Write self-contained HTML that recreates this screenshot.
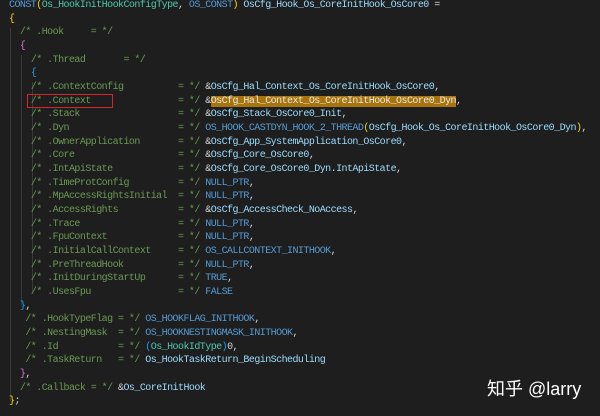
<!DOCTYPE html>
<html><head><meta charset="utf-8"><style>
html,body{margin:0;padding:0;background:#1e1e1e;width:600px;height:416px;overflow:hidden}
pre{position:absolute;left:9px;top:-1px;margin:0;font-family:"Liberation Mono",monospace;font-size:10px;line-height:13.67px;color:#d4d4d4;letter-spacing:-0.55px}
.c{color:#6a9955}.v{color:#9cdcfe}.m{color:#569cd6}.t{color:#4ec9b0}.y{color:#ffd700}.p{color:#da70d6}.b{color:#179fff}
.hl{background:#a8740c;color:#e8e8e8}
.box{position:absolute;left:27px;top:94px;width:86px;height:14px;border:1.5px solid #d8242b;box-sizing:border-box}
.g{position:absolute;width:1px;background:#3a3a3a}
.wm{position:absolute;left:487px;top:375px;color:#fff;font-family:"Liberation Sans","Noto Sans CJK SC",sans-serif;font-size:18px;white-space:nowrap}
</style></head><body>
<div class="g" style="left:10px;top:28px;height:373px"></div>
<div class="g" style="left:21px;top:55px;height:250px"></div>
<div class="g" style="left:32px;top:82px;height:210px"></div>
<pre><span class="m">CONST</span><span class="y">(</span><span class="t">Os_HookInitHookConfigType</span>, <span class="m">OS_CONST</span><span class="y">)</span> <span class="v">OsCfg_Hook_Os_CoreInitHook_OsCore0</span> =
<span class="y">{</span>
  <span class="c">/* .Hook     = */</span>
  <span class="p">{</span>
    <span class="c">/* .Thread       = */</span>
    <span class="b">{</span>
    <span class="c">/* .ContextConfig          = */</span> &amp;<span class="v">OsCfg_Hal_Context_Os_CoreInitHook_OsCore0</span>,
    <span class="c">/* .Context                = */</span> &amp;<span class="hl">OsCfg_Hal_Context_Os_CoreInitHook_OsCore0_Dyn</span>,
    <span class="c">/* .Stack                  = */</span> &amp;<span class="v">OsCfg_Stack_OsCore0_Init</span>,
    <span class="c">/* .Dyn                    = */</span> <span class="m">OS_HOOK_CASTDYN_HOOK_2_THREAD</span><span class="y">(</span><span class="v">OsCfg_Hook_Os_CoreInitHook_OsCore0_Dyn</span><span class="y">)</span>,
    <span class="c">/* .OwnerApplication       = */</span> &amp;<span class="v">OsCfg_App_SystemApplication_OsCore0</span>,
    <span class="c">/* .Core                   = */</span> &amp;<span class="v">OsCfg_Core_OsCore0</span>,
    <span class="c">/* .IntApiState            = */</span> &amp;<span class="v">OsCfg_Core_OsCore0_Dyn.IntApiState</span>,
    <span class="c">/* .TimeProtConfig         = */</span> <span class="m">NULL_PTR</span>,
    <span class="c">/* .MpAccessRightsInitial  = */</span> <span class="m">NULL_PTR</span>,
    <span class="c">/* .AccessRights           = */</span> &amp;<span class="v">OsCfg_AccessCheck_NoAccess</span>,
    <span class="c">/* .Trace                  = */</span> <span class="m">NULL_PTR</span>,
    <span class="c">/* .FpuContext             = */</span> <span class="m">NULL_PTR</span>,
    <span class="c">/* .InitialCallContext     = */</span> <span class="m">OS_CALLCONTEXT_INITHOOK</span>,
    <span class="c">/* .PreThreadHook          = */</span> <span class="m">NULL_PTR</span>,
    <span class="c">/* .InitDuringStartUp      = */</span> <span class="m">TRUE</span>,
    <span class="c">/* .UsesFpu                = */</span> <span class="m">FALSE</span>
  <span class="b">}</span>,
   <span class="c">/* .HookTypeFlag = */</span> <span class="m">OS_HOOKFLAG_INITHOOK</span>,
   <span class="c">/* .NestingMask  = */</span> <span class="m">OS_HOOKNESTINGMASK_INITHOOK</span>,
   <span class="c">/* .Id           = */</span> <span class="b">(</span><span class="t">Os_HookIdType</span><span class="b">)</span>0,
   <span class="c">/* .TaskReturn   = */</span> <span class="v">Os_HookTaskReturn_BeginScheduling</span>
  <span class="p">}</span>,
  <span class="c">/* .Callback = */</span> &amp;<span class="v">Os_CoreInitHook</span>
<span class="y">}</span>;</pre>
<div class="box"></div>
<div class="wm">知乎 @larry</div>
</body></html>
